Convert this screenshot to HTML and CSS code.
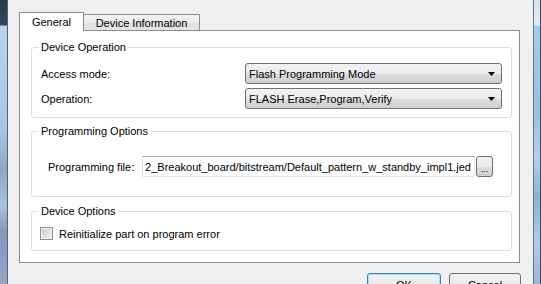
FILE: index.html
```html
<!DOCTYPE html>
<html lang="en">
<head>
    <meta charset="UTF-8">
    <title>Programming Settings</title>
    <link rel="stylesheet" href="styles.css">
</head>
<body>
<div class="window">
    <div class="frame frame-left"></div>
    <div class="dialog">
        <div class="tabs">
            <div class="tab tab-active">General</div>
            <div class="tab tab-info">Device Information</div>
        </div>
        <div class="panel">
            <!--设备操作-->
            <fieldset class="group group-operation">
                <legend>Device Operation</legend>
                <div class="row">
                    <span class="label">Access mode:</span>
                    <div class="combo">
                        <span>Flash Programming Mode</span>
                        <svg width="7" height="4" viewBox="0 0 7 4"><path d="M0 0h7L3.5 4z" fill="#000"/></svg>
                    </div>
                </div>
                <div class="row">
                    <span class="label">Operation:</span>
                    <div class="combo">
                        <span>FLASH Erase,Program,Verify</span>
                        <svg width="7" height="4" viewBox="0 0 7 4"><path d="M0 0h7L3.5 4z" fill="#000"/></svg>
                    </div>
                </div>
            </fieldset>
            <!--编程选项-->
            <fieldset class="group group-program">
                <legend>Programming Options</legend>
                <div class="row file-row">
                    <span class="file-label">Programming file:</span>
                    <div class="textbox"><span>2_Breakout_board/bitstream/Default_pattern_w_standby_impl1.jed</span></div>
                    <button class="browse">...</button>
                </div>
            </fieldset>
            <!--设备选项-->
            <fieldset class="group group-device">
                <legend>Device Options</legend>
                <div class="row check-row">
                    <span class="checkbox"></span>
                    <span>Reinitialize part on program error</span>
                </div>
            </fieldset>
        </div>
        <div class="buttons">
            <button class="btn btn-default btn-ok">OK</button>
            <button class="btn btn-cancel">Cancel</button>
        </div>
    </div>
    <div class="frame frame-right"></div>
</div>
</body>
</html>
```

FILE: styles.css
```css
*{
    padding: 0;
    margin: 0;
    box-sizing: border-box;
}
body{
    width: 541px;
    height: 284px;
    overflow: hidden;
    font-family: "Liberation Sans", Arial, sans-serif;
    font-size: 11px;
    color: #000;
    background: #f0f0f0;
}
.window{
    display: flex;
    height: 284px;
    overflow: hidden;
}
.frame{
    width: 8px;
    height: 100%;
    flex: none;
}
.frame-left{
    border-right: 1px solid #56626e;
    background: linear-gradient(to bottom, #2b3946 0, #34475a 25px, #b8d3ef 26px, #a9c6e6 45%, #8fa8c2 60%, #a6c2e0 72%, #8797b3 82%, #8a9fd0 92%, #9aa6b8 100%);
}
.frame-right{
    border-left: 1px solid #67737f;
    border-right: 1px solid #3b4a5a;
    background: linear-gradient(to bottom, #d7e2ea 0, #e3ebf1 25px, #a9c9ea 26px, #9fbfe0 40%, #b3d0ee 55%, #8fb0d2 70%, #b0cdeb 85%, #9cb8d6 100%);
}
.dialog{
    flex: 1;
    height: 100%;
    padding: 12px 13px 0 11px;
    background: #f0f0f0;
}

/* tabs */
.tabs{
    display: flex;
    align-items: flex-end;
}
.tab{
    display: flex;
    align-items: center;
    justify-content: center;
    border: 1px solid #898c95;
    border-bottom: none;
}
.tab-active{
    position: relative;
    z-index: 1;
    width: 65px;
    height: 19px;
    margin-bottom: -1px;
    background: #fff;
}
.tab-info{
    width: 117px;
    height: 16px;
    margin-left: -1px;
    padding-top: 1px;
    background: linear-gradient(to bottom, #f3f3f3 0%, #ebebeb 50%, #dedede 51%, #e6e6e6 100%);
}

.panel{
    height: 233px;
    border: 1px solid #898c95;
    background: #fff;
    padding: 10px 7px 11px 11px;
}

/* group boxes */
.group{
    border: 1px solid #d5dfe5;
    border-radius: 3px;
    padding: 0 9px;
    min-width: 0;
}
.group legend{
    line-height: 13px;
    padding: 0 2px;
    margin-left: -2px;
}
.group-operation{
    padding-top: 9px;
    padding-bottom: 8px;
}
.group-program{
    margin-top: 7px;
    padding-top: 18px;
    padding-bottom: 19px;
}
.group-device{
    margin-top: 8px;
    padding-top: 8px;
    padding-bottom: 9px;
}
.row{
    display: flex;
    align-items: center;
}
.row + .row{
    margin-top: 4px;
}
.label{
    flex: 1;
}
.combo{
    width: 257px;
    height: 21px;
    display: flex;
    align-items: center;
    justify-content: space-between;
    padding: 0 6px 0 3px;
    border: 1px solid #707070;
    border-radius: 3px;
    background: linear-gradient(to bottom, #f2f2f2 0%, #ebebeb 50%, #dddddd 51%, #cfcfcf 100%);
}

.file-row{
    padding-left: 7px;
}
.file-label{
    width: 94px;
    flex: none;
}
.textbox{
    width: 333px;
    height: 21px;
    flex: none;
    display: flex;
    align-items: center;
    justify-content: flex-end;
    overflow: hidden;
    white-space: nowrap;
    padding: 0 3px 0 1px;
    border: 1px solid #e3e9ef;
    border-top-color: #abadb3;
    border-left-color: #dbdfe6;
}
.browse{
    width: 17px;
    height: 21px;
    margin-left: 1px;
    flex: none;
    font-family: "Liberation Sans", Arial, sans-serif;
    font-size: 9px;
    line-height: 9px;
    padding-top: 6px;
    border: 1px solid #707070;
    border-radius: 3px;
    background: linear-gradient(to bottom, #f2f2f2 0%, #ebebeb 50%, #dddddd 51%, #cfcfcf 100%);
    color: #000;
}

.check-row{
    height: 15px;
}
.checkbox{
    width: 13px;
    height: 13px;
    margin-left: -1px;
    margin-right: 6px;
    border: 1px solid #8e8f8f;
    background: linear-gradient(135deg, #c4c8cf 0%, #e2e4e7 60%, #f4f4f4 100%);
    box-shadow: inset 0 0 0 1px #f4f4f4;
}

/* bottom buttons */
.buttons{
    display: flex;
    justify-content: flex-end;
    gap: 8px;
    margin-top: 10px;
    margin-right: -1px;
}
.btn{
    height: 23px;
    font-family: "Liberation Sans", Arial, sans-serif;
    font-size: 11px;
    color: #000;
    border: 1px solid #707070;
    border-radius: 3px;
    background: linear-gradient(to bottom, #f2f2f2 0%, #ebebeb 50%, #dddddd 51%, #cfcfcf 100%);
}
.btn-ok{
    width: 74px;
}
.btn-cancel{
    width: 72px;
}
.btn-default{
    border-color: #3c7fb1;
    box-shadow: inset 0 0 0 1px #a6e3fb;
}
```
